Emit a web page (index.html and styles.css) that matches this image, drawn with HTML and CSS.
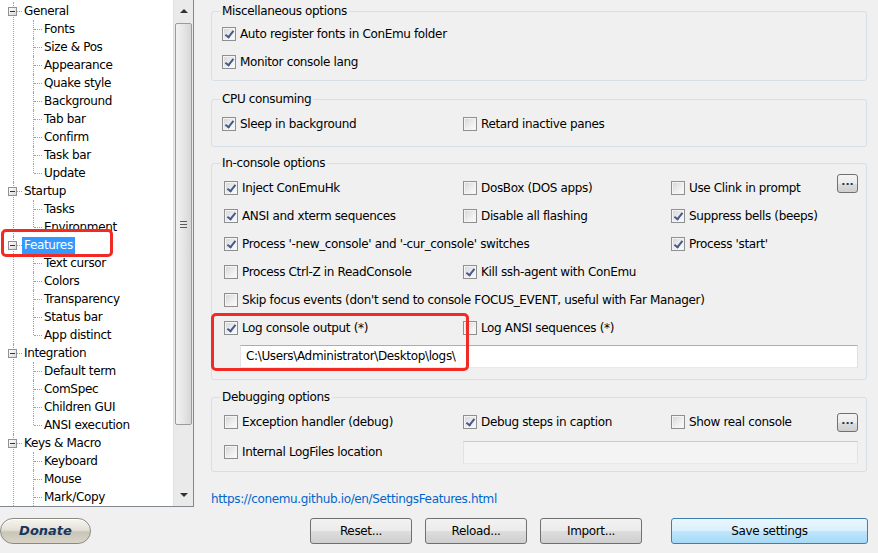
FILE: index.html
```html
<!DOCTYPE html>
<html lang="en">
<head>
  <meta charset="UTF-8" />
  <title>ConEmu Settings - Features</title>
  <link rel="stylesheet" href="styles.css">
</head>
<body>
  <div class="window">

    <!-- Settings tree -->
    <div class="tree">
      <ul class="tree-list">
        <li class="node">
          <div class="head"><span class="exp"></span><span class="hline"></span><span class="label">General</span></div>
          <ul class="kids">
            <li><span class="hline"></span><span class="label">Fonts</span></li>
            <li><span class="hline"></span><span class="label">Size &amp; Pos</span></li>
            <li><span class="hline"></span><span class="label">Appearance</span></li>
            <li><span class="hline"></span><span class="label">Quake style</span></li>
            <li><span class="hline"></span><span class="label">Background</span></li>
            <li><span class="hline"></span><span class="label">Tab bar</span></li>
            <li><span class="hline"></span><span class="label">Confirm</span></li>
            <li><span class="hline"></span><span class="label">Task bar</span></li>
            <li><span class="hline"></span><span class="label">Update</span></li>
          </ul>
        </li>
        <li class="node">
          <div class="head"><span class="exp"></span><span class="hline"></span><span class="label">Startup</span></div>
          <ul class="kids">
            <li><span class="hline"></span><span class="label">Tasks</span></li>
            <li><span class="hline"></span><span class="label">Environment</span></li>
          </ul>
        </li>
        <li class="node">
          <div class="head"><span class="exp"></span><span class="hline"></span><span class="label selected">Features</span></div>
          <ul class="kids">
            <li><span class="hline"></span><span class="label">Text cursor</span></li>
            <li><span class="hline"></span><span class="label">Colors</span></li>
            <li><span class="hline"></span><span class="label">Transparency</span></li>
            <li><span class="hline"></span><span class="label">Status bar</span></li>
            <li><span class="hline"></span><span class="label">App distinct</span></li>
          </ul>
        </li>
        <li class="node">
          <div class="head"><span class="exp"></span><span class="hline"></span><span class="label">Integration</span></div>
          <ul class="kids">
            <li><span class="hline"></span><span class="label">Default term</span></li>
            <li><span class="hline"></span><span class="label">ComSpec</span></li>
            <li><span class="hline"></span><span class="label">Children GUI</span></li>
            <li><span class="hline"></span><span class="label">ANSI execution</span></li>
          </ul>
        </li>
        <li class="node">
          <div class="head"><span class="exp"></span><span class="hline"></span><span class="label">Keys &amp; Macro</span></div>
          <ul class="kids">
            <li><span class="hline"></span><span class="label">Keyboard</span></li>
            <li><span class="hline"></span><span class="label">Mouse</span></li>
            <li><span class="hline"></span><span class="label">Mark/Copy</span></li>
            <li class="more"><span class="hline"></span></li>
          </ul>
        </li>
      </ul>

      <div class="scrollbar">
        <div class="arrow"><span class="tri up"></span></div>
        <div class="thumb"><span class="grip"></span></div>
        <div class="track"></div>
        <div class="arrow"><span class="tri down"></span></div>
      </div>
    </div>

    <!-- Options -->
    <div class="settings">
      <fieldset class="group g1">
        <legend>Miscellaneous options</legend>
        <div class="row"><label class="check"><span class="cb on"></span>Auto register fonts in ConEmu folder</label></div>
        <div class="row"><label class="check"><span class="cb on"></span>Monitor console lang</label></div>
      </fieldset>

      <fieldset class="group g2">
        <legend>CPU consuming</legend>
        <div class="row two">
          <label class="check"><span class="cb on"></span>Sleep in background</label>
          <label class="check"><span class="cb"></span>Retard inactive panes</label>
        </div>
      </fieldset>

      <fieldset class="group g3">
        <legend>In-console options</legend>
        <div class="row four first">
          <label class="check"><span class="cb on"></span>Inject ConEmuHk</label>
          <label class="check"><span class="cb"></span>DosBox (DOS apps)</label>
          <label class="check"><span class="cb"></span>Use Clink in prompt</label>
          <button class="dots top">...</button>
        </div>
        <div class="row four">
          <label class="check"><span class="cb on"></span>ANSI and xterm sequences</label>
          <label class="check"><span class="cb"></span>Disable all flashing</label>
          <label class="check"><span class="cb on"></span>Suppress bells (beeps)</label>
        </div>
        <div class="row four">
          <label class="check span2"><span class="cb on"></span>Process '-new_console' and '-cur_console' switches</label>
          <label class="check"><span class="cb on"></span>Process 'start'</label>
        </div>
        <div class="row four">
          <label class="check"><span class="cb"></span>Process Ctrl-Z in ReadConsole</label>
          <label class="check"><span class="cb on"></span>Kill ssh-agent with ConEmu</label>
        </div>
        <div class="row four">
          <label class="check full"><span class="cb"></span>Skip focus events (don't send to console FOCUS_EVENT, useful with Far Manager)</label>
        </div>
        <div class="row four">
          <label class="check"><span class="cb on"></span>Log console output (*)</label>
          <label class="check"><span class="cb"></span>Log ANSI sequences (*)</label>
        </div>
        <div class="row four">
          <input class="path full" type="text" value="C:\Users\Administrator\Desktop\logs\">
        </div>
      </fieldset>

      <fieldset class="group g4">
        <legend>Debugging options</legend>
        <div class="row four">
          <label class="check"><span class="cb"></span>Exception handler (debug)</label>
          <label class="check"><span class="cb on"></span>Debug steps in caption</label>
          <label class="check"><span class="cb"></span>Show real console</label>
          <button class="dots">...</button>
        </div>
        <div class="row four tall">
          <label class="check"><span class="cb"></span>Internal LogFiles location</label>
          <input class="path off" type="text" disabled>
        </div>
      </fieldset>

      <a class="help" href="#">https://conemu.github.io/en/SettingsFeatures.html</a>
    </div>

    <div class="donate-bar">
      <button class="donate">Donate</button>
    </div>

    <div class="buttons">
      <button class="btn">Reset...</button>
      <button class="btn">Reload...</button>
      <button class="btn">Import...</button>
      <button class="btn save">Save settings</button>
    </div>

    <!-- annotation boxes -->
    <div class="mark mark-tree"></div>
    <div class="mark mark-log"></div>
  </div>
</body>
</html>
```

FILE: styles.css
```css
body {
  margin: 0;
  background: #f0f0f0;
  font-family: "DejaVu Sans", sans-serif;
  font-size: 12px;
  letter-spacing: -0.35px;
  color: #000;
}

.window {
  position: relative;
  display: grid;
  grid-template-columns: 194px 1fr;
  grid-template-rows: 507px 46px;
  width: 878px;
  height: 553px;
  overflow: hidden;
}

/* ---------- tree ---------- */

.tree {
  display: flex;
  border-right: 1px solid #828790;
  border-bottom: 1px solid #828790;
  background: #fff;
  overflow: hidden;
}

.tree-list {
  flex: 1;
  list-style: none;
  margin: 0;
  padding: 2px 0 0 0;
  overflow: hidden;
}

.tree-list ul {
  list-style: none;
  margin: 0;
  padding: 0;
}

.node {
  margin-left: 13px;
  border-left: 1px dotted #a0a0a0;
}

.head {
  display: flex;
  align-items: center;
  height: 18px;
}

.exp {
  flex-shrink: 0;
  display: flex;
  align-items: center;
  justify-content: center;
  box-sizing: border-box;
  width: 9px;
  height: 9px;
  margin-left: -6px;
  border: 1px solid #919191;
  background: linear-gradient(135deg, #ffffff, #d8d8d8);
}

.exp::after {
  content: "";
  width: 5px;
  height: 1px;
  background: #1e395b;
}

.hline {
  flex-shrink: 0;
  width: 5px;
  border-top: 1px dotted #a0a0a0;
}

.label {
  padding: 1px 2px;
  line-height: 15px;
  white-space: nowrap;
}

.label.selected {
  background: #3399ff;
  color: #fff;
}

.kids {
  margin-left: 19px !important;
}

.kids li {
  display: flex;
  align-items: center;
  height: 18px;
}

.kids li::before {
  content: "";
  align-self: stretch;
  border-left: 1px dotted #a0a0a0;
}

.kids li:last-child::before {
  align-self: flex-start;
  height: 9px;
}

.kids li.more::before {
  height: 18px;
}

.kids li.more .hline {
  visibility: hidden;
}

.kids .hline {
  width: 8px;
}

/* ---------- scrollbar ---------- */

.scrollbar {
  display: flex;
  flex-direction: column;
  width: 20px;
  background: #eaeaea;
  border-left: 1px solid #e0e0e0;
  box-sizing: border-box;
}

.arrow {
  display: flex;
  align-items: center;
  justify-content: center;
  height: 22px;
}

.tri {
  width: 0;
  height: 0;
  border-left: 4px solid transparent;
  border-right: 4px solid transparent;
}

.tri.up {
  border-bottom: 4px solid #333;
}

.tri.down {
  border-top: 4px solid #333;
}

.thumb {
  display: flex;
  align-items: center;
  justify-content: center;
  height: 400px;
  margin: 1px 1px 0 1px;
  border: 1px solid #9b9b9b;
  border-radius: 2px;
  background: linear-gradient(90deg, #f2f2f2, #e6e6e6 50%, #d6d6d6);
}

.grip {
  width: 7px;
  height: 7px;
  background: repeating-linear-gradient(#5a5a5a 0 1px, transparent 1px 3px);
}

.track {
  flex: 1;
}

/* ---------- option groups ---------- */

.settings {
  padding: 4px 11px 0 17px;
}

.group {
  margin: 0;
  padding: 0 8px 0 10px;
  min-width: 0;
  border: 1px solid #d5dfe5;
  border-radius: 3px;
}

.group legend {
  padding: 0 2px;
  margin-left: -2px;
  line-height: 15px;
}

.g1 {
  padding-top: 1px;
  padding-bottom: 4px;
}

.g2 {
  margin-top: 11px;
  padding-top: 3px;
  padding-bottom: 8px;
}

.g3 {
  margin-top: 9px;
  padding-top: 2px;
  padding-bottom: 9px;
  padding-left: 12px;
}

.g4 {
  margin-top: 10px;
  padding-top: 3px;
  padding-bottom: 4px;
  padding-left: 12px;
}

.g3 legend,
.g4 legend {
  margin-left: -4px;
}

.row {
  display: flex;
  align-items: center;
  height: 28px;
}

.row.two {
  display: grid;
  grid-template-columns: 241px 1fr;
}

.row.four {
  display: grid;
  grid-template-columns: 239px 208px 1fr 21px;
}

.row.first {
  height: 29px;
}

.row.tall {
  height: 30px;
  margin-top: 1px;
}

.check {
  display: flex;
  align-items: center;
  gap: 4px;
  white-space: nowrap;
}

.span2 {
  grid-column: span 2;
}

.full {
  grid-column: 1 / -1;
}

.cb {
  position: relative;
  flex-shrink: 0;
  box-sizing: border-box;
  width: 14px;
  height: 14px;
  border: 1px solid #8e8f8f;
  background: linear-gradient(135deg, #d4d4d4, #f0f0f0 60%, #fbfbfb);
  box-shadow: inset 0 0 0 1px #f4f4f4;
}

.cb.on::after {
  content: "";
  position: absolute;
  left: 4px;
  top: 1px;
  width: 3px;
  height: 7px;
  border: solid #44598e;
  border-width: 0 2px 2px 0;
  transform: rotate(38deg);
}

.dots {
  box-sizing: border-box;
  width: 21px;
  height: 19px;
  padding: 0 0 4px 0;
  border: 1px solid #707070;
  border-radius: 3px;
  background: linear-gradient(#f4f4f4, #ebebeb 50%, #dddddd 51%, #cfcfcf);
  font-family: "DejaVu Sans", sans-serif;
  font-size: 11px;
  font-weight: bold;
  letter-spacing: 0;
  color: #1d3556;
}

.dots.top {
  align-self: start;
  margin-top: 1px;
}

.path {
  box-sizing: border-box;
  height: 23px;
  padding: 0 5px;
  border: 1px solid #abadb3;
  border-color: #abadb3 #dbdfe6 #e3e9ef #e2e3ea;
  background: #fff;
  font-family: "DejaVu Sans", sans-serif;
  font-size: 12px;
  letter-spacing: -0.35px;
  color: #000;
}

.path.full {
  margin-left: 16px;
}

.path.off {
  grid-column: 2 / -1;
  background: #f4f4f4;
  border-color: #c9cbce #e0e2e5 #e6e8eb #e0e2e5;
}

.help {
  display: block;
  margin-top: 20px;
  line-height: 15px;
  color: #0066cc;
  text-decoration: none;
}

/* ---------- bottom bar ---------- */

.donate-bar {
  padding-top: 11px;
}

.donate {
  width: 91px;
  height: 26px;
  padding: 0 0 1px 0;
  border: 1px solid #8c8a80;
  border-radius: 13px;
  background: linear-gradient(#f6f5ef, #e4e2d8 45%, #c9c6b8 55%, #d8d5c8);
  box-shadow: inset 0 1px 0 #fff;
  font-family: "DejaVu Sans", sans-serif;
  font-size: 13px;
  font-weight: bold;
  font-style: italic;
  letter-spacing: 0;
  color: #17365e;
}

.buttons {
  display: flex;
  gap: 13px;
  padding: 11px 0 0 116px;
}

.btn {
  width: 102px;
  height: 26px;
  border: 1px solid #707070;
  border-radius: 3px;
  background: linear-gradient(#f2f2f2, #ebebeb 50%, #dddddd 51%, #cfcfcf);
  font-family: "DejaVu Sans", sans-serif;
  font-size: 12px;
  letter-spacing: -0.35px;
  color: #000;
}

.btn.save {
  width: 197px;
  margin-left: 16px;
  border-color: #3c7fb1;
  background: linear-gradient(#eaf6fd, #d9f0fc 50%, #bee6fd 51%, #a7d9f5);
}

/* ---------- red annotation boxes ---------- */

.mark {
  position: absolute;
  border: 3px solid #f22a24;
  border-radius: 5px;
  box-sizing: border-box;
  pointer-events: none;
}

.mark-tree {
  left: 1px;
  top: 229px;
  width: 112px;
  height: 28px;
}

.mark-log {
  left: 211px;
  top: 313px;
  width: 258px;
  height: 58px;
}
```
